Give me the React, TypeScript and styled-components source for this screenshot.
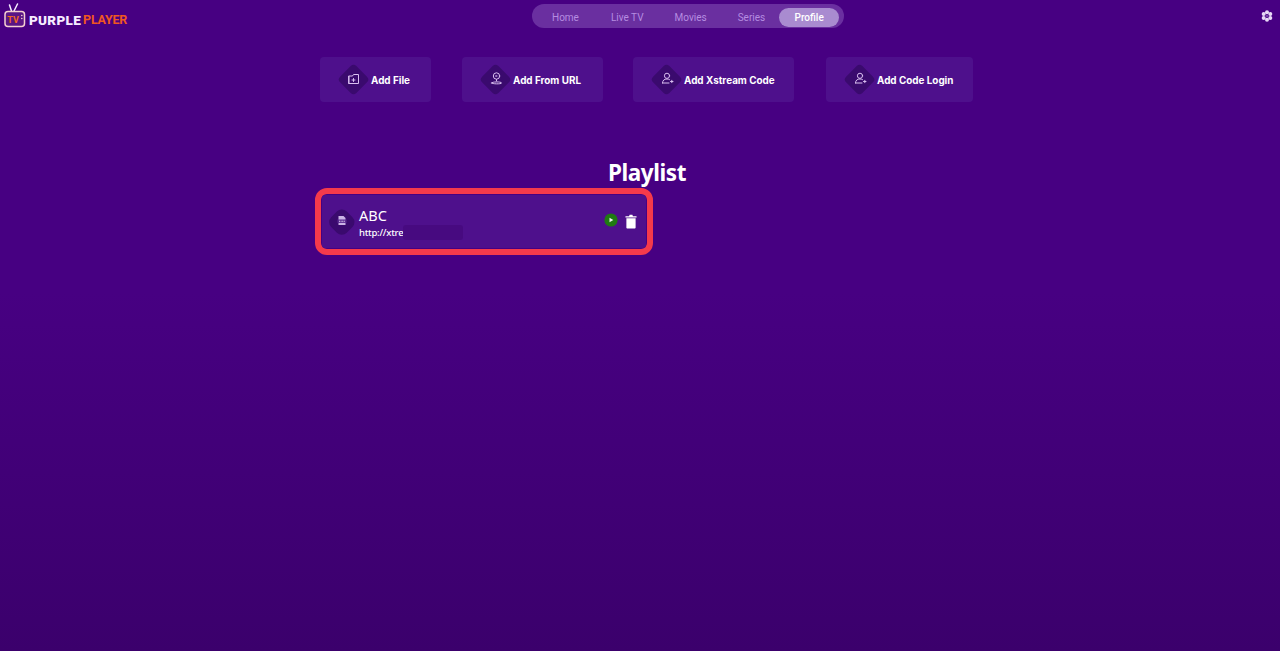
import React from "react";
import styled, { createGlobalStyle } from "styled-components";

const Global = createGlobalStyle`
  html, body { margin: 0; padding: 0; height: 100%; }
  body { background: #3c006d; font-family: "Inter", "Liberation Sans", sans-serif; }
  #root { height: 100%; }
`;

const Page = styled.div`
  width: 1280px;
  height: 651px;
  overflow: hidden;
  background: linear-gradient(180deg, #470082 0%, #470082 45%, #3b006c 100%);
  color: #fff;
`;

const Header = styled.header`
  display: flex;
  align-items: flex-start;
  height: 34px;
`;

const Logo = styled.div`
  display: flex;
  align-items: center;
  width: 532px;
  height: 31px;
  padding-left: 4px;
  box-sizing: border-box;
  flex: none;
`;

const LogoWord = styled.span<{ $accent?: boolean }>`
  font-family: "Roboto", "Liberation Sans", sans-serif;
  font-weight: ${(p) => (p.$accent ? 700 : 900)};
  font-size: ${(p) => (p.$accent ? "12.5px" : "13.5px")};
  letter-spacing: ${(p) => (p.$accent ? "-0.2px" : "0.3px")};
  line-height: 16px;
  margin-left: ${(p) => (p.$accent ? "2px" : "3px")};
  margin-top: 8px;
  color: ${(p) => (p.$accent ? "#f0571f" : "#f6ecff")};
  white-space: nowrap;
`;

const Nav = styled.nav`
  display: flex;
  align-items: center;
  width: 312px;
  height: 24px;
  margin-top: 4px;
  box-sizing: border-box;
  background: #6a2fa0;
  border-radius: 12px;
  flex: none;
`;

const NavItem = styled.span<{ $left: number; $active?: boolean }>`
  font-family: "Roboto", "Liberation Sans", sans-serif;
  font-size: 10px;
  font-weight: ${(p) => (p.$active ? 500 : 400)};
  color: ${(p) => (p.$active ? "#fff" : "#b58ce0")};
  margin-left: ${(p) => p.$left}px;
  line-height: 19px;
  padding-top: 2px;
  white-space: nowrap;
  flex: none;
  ${(p) =>
    p.$active &&
    `
    background: #a98bd0;
    border-radius: 10px;
    width: 60px;
    text-align: center;
    padding-top: 0;
    margin-top: 2px;
    line-height: 19px;
  `}
`;

const Settings = styled.div`
  margin-left: auto;
  margin-right: 7px;
  margin-top: 10px;
  display: flex;
`;

const Actions = styled.div`
  display: flex;
  margin: 23px 0 0 320px;
  height: 45px;
`;

const ActionButton = styled.div<{ $width: number; $gap: number }>`
  display: flex;
  align-items: center;
  width: ${(p) => p.$width}px;
  margin-right: ${(p) => p.$gap}px;
  padding-left: 18px;
  box-sizing: border-box;
  background: #4e108c;
  border-radius: 4px;
  flex: none;
`;

const Diamond = styled.span<{ $size: number; $radius: number }>`
  position: relative;
  display: flex;
  align-items: center;
  justify-content: center;
  width: ${(p) => p.$size}px;
  height: ${(p) => p.$size}px;
  flex: none;

  &::before {
    content: "";
    position: absolute;
    inset: 14%;
    background: #3a0a6e;
    border-radius: ${(p) => p.$radius}px;
    transform: rotate(45deg);
  }
  & > svg {
    position: relative;
    margin-top: -2px;
  }
`;

const ActionLabel = styled.span`
  font-family: "Inter", "Liberation Sans", sans-serif;
  font-weight: 700;
  font-size: 9.9px;
  color: #fff;
  margin-left: 1px;
  margin-top: 1px;
  white-space: nowrap;
`;

const Main = styled.main`
  width: 654px;
  margin-left: 320px;
`;

const Title = styled.h1`
  margin: 55px 0 0;
  font-family: "Noto Sans", "Open Sans", sans-serif;
  font-weight: 700;
  font-size: 22.5px;
  letter-spacing: -0.45px;
  line-height: 31px;
  text-align: center;
`;

const Highlight = styled.div`
  width: 338px;
  height: 67px;
  margin: 0 0 0 -5px;
  box-sizing: border-box;
  padding: 1px;
  border: 6px solid #f53a4b;
  border-radius: 12px;
  background: #470082;
`;

const Card = styled.div`
  display: flex;
  align-items: center;
  height: 100%;
  padding-left: 5px;
  padding-right: 9px;
  box-sizing: border-box;
  background: #4e108c;
  border-radius: 3px;
`;

const CardText = styled.div`
  margin-left: 2px;
  display: flex;
  flex-direction: column;
  font-family: "Noto Sans", "Open Sans", sans-serif;
`;

const CardName = styled.span`
  font-size: 14.5px;
  line-height: 19px;
  margin-top: 2px;
`;

const CardUrl = styled.span`
  display: flex;
  font-family: "Noto Sans", "Open Sans", sans-serif;
  font-size: 9.5px;
  font-weight: 500;
  letter-spacing: -0.25px;
  line-height: 15px;
`;

const Redaction = styled.span`
  display: block;
  width: 60px;
  height: 15px;
  background: #470a80;
  border-radius: 3px;
`;

const CardActions = styled.div`
  margin-left: auto;
  display: flex;
  align-items: center;
  gap: 7px;
`;

const PlayWrap = styled.span`
  display: flex;
  margin-top: -4px;
`;

const TvLogo = () => (
  <svg width="22" height="25" viewBox="0 0 22 25" style={{ flex: "none" }}>
    <path d="M7.5 8 L5.5 2 M10 8 L13.5 1" stroke="#f6ecff" strokeWidth="1.5" fill="none" strokeLinecap="round" />
    <rect x="1" y="8.5" width="19.5" height="15" rx="3" fill="#5a1585" stroke="#f4cfd0" strokeWidth="1.5" />
    <circle cx="17.8" cy="12.5" r="0.8" fill="#f4cfd0" />
    <circle cx="17.8" cy="15.5" r="0.8" fill="#f4cfd0" />
    <text x="9" y="19.8" fontSize="9" fontWeight="700" fontFamily="Roboto, sans-serif" fill="#f0671f" textAnchor="middle">TV</text>
  </svg>
);

const Gear = () => (
  <svg width="12" height="12" viewBox="0 0 12 12">
    <g fill="#e8d9f6">
      <circle cx="6" cy="2.2" r="2" />
      <circle cx="6" cy="9.8" r="2" />
      <circle cx="2.7" cy="4.1" r="2" />
      <circle cx="9.3" cy="4.1" r="2" />
      <circle cx="2.7" cy="7.9" r="2" />
      <circle cx="9.3" cy="7.9" r="2" />
    </g>
    <circle cx="6" cy="6" r="1.3" fill="#7a45ad" />
  </svg>
);

const stroke = { stroke: "#d9bff0", strokeWidth: 1, fill: "none", strokeLinecap: "round", strokeLinejoin: "round" } as const;

const FileIcon = () => (
  <svg width="12" height="12" viewBox="0 0 12 12">
    <path d="M1 3 H4.5 L5.5 1.5 H10.5 V10.5 H1 Z" {...stroke} />
    <path d="M1 3.5 V10.5 M4 7 H7 M5.5 5.5 V8.5" {...stroke} />
  </svg>
);

const UrlIcon = () => (
  <svg width="13" height="13" viewBox="0 0 13 13">
    <circle cx="6.5" cy="4" r="3.2" {...stroke} />
    <path d="M5.5 3 L8 4 L5.5 5 Z" fill="#d9bff0" />
    <path d="M6.5 7.5 V9 M1.5 11 C1.5 9.5 11.5 9.5 11.5 11 C11.5 12.2 1.5 12.2 1.5 11 Z" {...stroke} />
  </svg>
);

const UserIcon = () => (
  <svg width="13" height="13" viewBox="0 0 13 13">
    <circle cx="6" cy="3.8" r="2.6" {...stroke} />
    <path d="M1.5 11 C1.5 8.2 3.4 7 6 7 C7 7 7.8 7.2 8.5 7.6 M1.5 11 H8" {...stroke} />
    <path d="M9.5 9.5 H12 M10.8 8.3 V10.7" {...stroke} />
  </svg>
);

const M3uIcon = () => (
  <svg width="10" height="11" viewBox="0 0 10 11">
    <path d="M1.5 1 H6.5 L8.5 3 V10 H1.5 Z" fill="#cbb3e6" />
    <rect x="0.5" y="4.5" width="9" height="3.4" fill="#5a2a92" />
    <path d="M2 6.2 H8" stroke="#e6d8f5" strokeWidth="1.1" strokeDasharray="1 0.6" />
  </svg>
);

const PlayIcon = () => (
  <svg width="14" height="14" viewBox="0 0 14 14">
    <circle cx="7" cy="7" r="6.6" fill="#1f7a12" />
    <path d="M5.5 4.8 L9.3 7 L5.5 9.2 Z" fill="#f2f2f2" />
  </svg>
);

const TrashIcon = () => (
  <svg width="12" height="15" viewBox="0 0 13 16">
    <path d="M0.5 2.2 H12.5 V3.6 H0.5 Z M4.4 2.2 L5 0.6 H8 L8.6 2.2 Z" fill="#fff" />
    <path d="M1.5 4.6 H11.5 V14.4 C11.5 15.2 11 15.6 10.2 15.6 H2.8 C2 15.6 1.5 15.2 1.5 14.4 Z" fill="#fff" />
  </svg>
);

const navItems = [
  { label: "Home", left: 20 },
  { label: "Live TV", left: 32 },
  { label: "Movies", left: 31 },
  { label: "Series", left: 31 },
];

const actions = [
  { label: "Add File", width: 111, gap: 31, icon: <FileIcon /> },
  { label: "Add From URL", width: 141, gap: 30, icon: <UrlIcon /> },
  { label: "Add Xstream Code", width: 161, gap: 32, icon: <UserIcon /> },
  { label: "Add Code Login", width: 147, gap: 0, icon: <UserIcon /> },
];

export default function App() {
  return (
    <Page>
      <Global />
      <Header>
        <Logo>
          <TvLogo />
          <LogoWord>PURPLE</LogoWord>
          <LogoWord $accent>PLAYER</LogoWord>
        </Logo>
        <Nav>
          {navItems.map((n) => (
            <NavItem key={n.label} $left={n.left}>
              {n.label}
            </NavItem>
          ))}
          <NavItem $left={14} $active>
            Profile
          </NavItem>
        </Nav>
        <Settings>
          <Gear />
        </Settings>
      </Header>
      <Actions>
        {actions.map((a) => (
          <ActionButton key={a.label} $width={a.width} $gap={a.gap}>
            <Diamond $size={32} $radius={4}>{a.icon}</Diamond>
            <ActionLabel>{a.label}</ActionLabel>
          </ActionButton>
        ))}
      </Actions>
      <Main>
        <Title>Playlist</Title>
        <Highlight>
          <Card>
            <Diamond $size={30} $radius={7}>
              <M3uIcon />
            </Diamond>
            <CardText>
              <CardName>ABC</CardName>
              <CardUrl>
                http://xtre
                <Redaction />
              </CardUrl>
            </CardText>
            <CardActions>
              <PlayWrap>
                <PlayIcon />
              </PlayWrap>
              <TrashIcon />
            </CardActions>
          </Card>
        </Highlight>
      </Main>
    </Page>
  );
}
